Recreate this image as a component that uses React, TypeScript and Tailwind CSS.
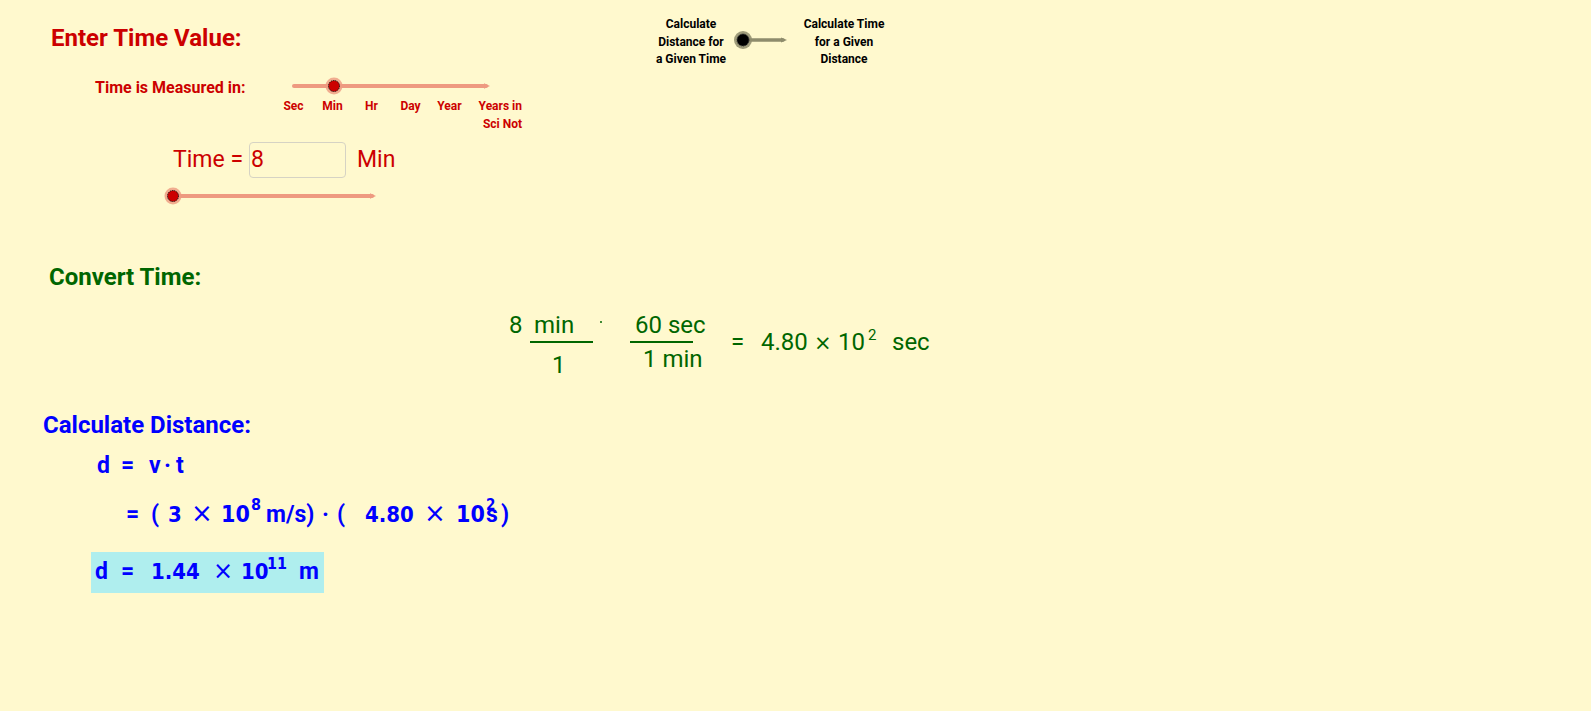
import React from "react";

function RedSlider({ width, knob }: { width: number; knob: number }) {
  const w = width + 20;
  const end = 10 + width;
  return (
    <svg width={w} height={20} viewBox={`0 0 ${w} 20`} className="block">
      <line x1={10} y1={10} x2={end - 3} y2={10} stroke="#ee9a80" strokeWidth={4} strokeLinecap="round" />
      <polygon points={`${end - 5},7.3 ${end + 1},10 ${end - 5},12.7`} fill="#ee9a80" />
      <circle cx={10 + knob} cy={10} r={8.5} fill="#ee9a80" opacity={0.8} />
      <circle cx={10 + knob} cy={10} r={5.5} fill="#cc0000" stroke="#111" strokeWidth={1} strokeDasharray="1.2 0.8" />
    </svg>
  );
}

function ToggleSlider() {
  return (
    <svg width={65} height={20} viewBox="0 0 65 20" className="block">
      <line x1={12} y1={10} x2={52} y2={10} stroke="#8e8c6c" strokeWidth={3.5} strokeLinecap="round" />
      <polygon points="50,7.6 56,10 50,12.4" fill="#8e8c6c" />
      <circle cx={12} cy={10} r={9} fill="#8e8c6c" opacity={0.85} />
      <circle cx={12} cy={10} r={6} fill="#000" stroke="#333" strokeWidth={1} strokeDasharray="1.2 0.8" />
    </svg>
  );
}

const DV = "font-['DejaVu_Sans_Condensed','DejaVu_Sans',sans-serif] [font-stretch:condensed]";
const DVX = "font-['DejaVu_Sans',sans-serif] font-normal leading-[0px]";

export default function App() {
  return (
    <div className="h-[711px] w-[1591px] overflow-hidden bg-[#fff9ce] font-['Roboto',sans-serif]">
      {/* Top section */}
      <div className="flex">
        <div className="w-[651px] shrink-0 text-[#cc0000]">
          <div className="h-[50px] whitespace-nowrap pl-[51px] pt-[26px] text-[24px] font-bold leading-none">
            Enter Time Value:
          </div>
          <div className="mt-[26px] flex">
            <div className="w-[284px] shrink-0 whitespace-nowrap pl-[95px] pt-[4px] text-[16px] font-bold leading-none">
              Time is Measured in:
            </div>
            <div className="flex flex-col">
              <RedSlider width={195} knob={40} />
              <div className="-ml-[10px] mt-[2px] flex text-[12px] font-bold leading-[17.5px]">
                {["Sec", "Min", "Hr", "Day", "Year"].map((l) => (
                  <div key={l} className="w-[39px] text-center">
                    {l}
                  </div>
                ))}
                <div className="w-[53px] whitespace-nowrap text-right">
                  Years in
                  <br />
                  Sci Not
                </div>
              </div>
            </div>
          </div>
          <div className="mt-[8px] flex h-[36px] items-center pl-[173px] pt-[1px] text-[23px] leading-none">
            <div className="w-[76px] whitespace-nowrap">Time =</div>
            <div className="flex h-[36px] w-[97px] items-center rounded-[4px] border border-[#d6d3c4] pl-[1px]">8</div>
            <div className="ml-[11px]">Min</div>
          </div>
          <div className="mt-[9px] pl-[163px]">
            <RedSlider width={202} knob={0} />
          </div>
        </div>

        <div className="flex items-start pt-[16px] text-[12px] font-bold leading-[17.5px] text-black">
          <div className="w-[80px] whitespace-nowrap text-center">
            Calculate
            <br />
            Distance for
            <br />a Given Time
          </div>
          <div className="mt-[14px]">
            <ToggleSlider />
          </div>
          <div className="w-[96px] whitespace-nowrap text-center">
            Calculate Time
            <br />
            for a Given
            <br />
            Distance
          </div>
        </div>
      </div>

      {/* Convert section */}
      <div className="mt-[59px] whitespace-nowrap pl-[49px] text-[24px] font-bold leading-none text-[#006600]">
        Convert Time:
      </div>
      <div className="mt-[24px] flex items-start pl-[509px] text-[24px] leading-none text-[#006600]">
        <div className="h-[24px] w-[21px]">8</div>
        <div className="flex w-[63px] flex-col">
          <div className="h-[24px] whitespace-nowrap pl-[4px]">min</div>
          <div className="mt-[4px] h-[2px] w-full bg-[#006600]" />
          <div className="mt-[10px] h-[24px] pl-[22px]">1</div>
        </div>
        <div className="h-[24px] w-[37px]">
          <div className="ml-[7px] mt-[8px] h-[2px] w-[2px] rounded-full bg-[#006600]" />
        </div>
        <div className="flex w-[63px] flex-col">
          <div className="h-[24px] w-[63px] whitespace-nowrap pl-[5px]">60 sec</div>
          <div className="mt-[4px] h-[2px] w-full bg-[#006600]" />
          <div className="mt-[4px] h-[24px] w-[63px] whitespace-nowrap pl-[13px]">1 min</div>
        </div>
        <div className="mt-[17px] h-[24px] whitespace-nowrap pl-[38px]">
          <span className="inline-block w-[30px]">=</span>
          <span className="inline-block w-[53px]">4.80</span>
          <span className={`inline-block w-[24px] text-[21px] ${DVX}`}>×</span>
          <span className="inline-block w-[30px]">10</span>
          <span className="inline-block w-[24px] align-[10px] text-[15px] leading-[0px]">2</span>
          <span className="inline-block">sec</span>
        </div>
      </div>

      {/* Distance section */}
      <div className="mt-[36px] whitespace-nowrap pl-[43px] text-[24px] font-bold leading-none text-[#0000ff]">
        Calculate Distance:
      </div>
      <div className="mt-[17px] h-[23px] whitespace-nowrap pl-[97px] text-[23px] font-bold leading-none text-[#0000ff]">
        <span className="inline-block w-[24px]">d</span>
        <span className="inline-block w-[28px]">=</span>
        <span className="inline-block w-[15px]">v</span>
        <span className="inline-block w-[12px]">·</span>
        <span className="inline-block">t</span>
      </div>
      <div className="mt-[26px] h-[23px] whitespace-nowrap pl-[126px] text-[23px] font-bold leading-none text-[#0000ff]">
        <span className="inline-block w-[25px]">=</span>
        <span className="inline-block w-[17px]">(</span>
        <span className={`inline-block w-[23px] text-[22px] ${DV}`}>3</span>
        <span className={`inline-block w-[30px] text-[26px] ${DVX}`}>×</span>
        <span className={`inline-block w-[30px] text-[23px] ${DV}`}>10</span>
        <span className={`inline-block w-[15px] align-[12px] text-[16px] leading-[0px] ${DV}`}>8</span>
        <span className="inline-block w-[56px]">m/s)</span>
        <span className="inline-block w-[15px]">·</span>
        <span className="inline-block w-[28px]">(</span>
        <span className={`inline-block w-[59px] text-[22px] ${DV}`}>4.80</span>
        <span className={`inline-block w-[32px] text-[26px] ${DVX}`}>×</span>
        <span className={`inline-block w-[30px] text-[23px] ${DV}`}>10</span>
        <span className={`inline-block w-0 align-[12px] text-[15px] leading-[0px] ${DV}`}>2</span>
        <span className="inline-block w-[15px]">s</span>
        <span className="inline-block">)</span>
      </div>
      <div className="ml-[91px] mt-[26px] h-[41px] w-[233px] whitespace-nowrap bg-[#afeeee] pl-[4px] pt-[7.6px] text-[23px] font-bold leading-none text-[#0000ff]">
        <span className="inline-block w-[26px]">d</span>
        <span className="inline-block w-[30px]">=</span>
        <span className={`inline-block w-[62px] text-[22px] ${DV}`}>1.44</span>
        <span className={`inline-block w-[28px] text-[24px] ${DVX}`}>×</span>
        <span className={`inline-block w-[26px] text-[22px] ${DV}`}>10</span>
        <span className={`inline-block w-[32px] align-[10px] text-[16px] leading-[0px] ${DV}`}>11</span>
        <span className="inline-block">m</span>
      </div>
    </div>
  );
}
